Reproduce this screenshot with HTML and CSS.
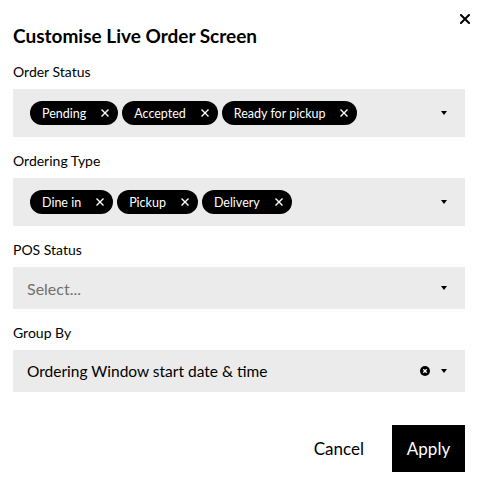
FILE: index.html
```html
<!DOCTYPE html>
<html>
<head>
<meta charset="utf-8">
<link rel="stylesheet" href="styles.css">
</head>
<body>
<div class="modal">
  <div class="close-row">
    <button class="close" aria-label="Close">
      <svg width="10" height="10" viewBox="0 0 10 10"><path d="M1 1L9 9M9 1L1 9" stroke="#000" stroke-width="2" stroke-linecap="square"/></svg>
    </button>
  </div>
  <h1 class="title">Customise Live Order Screen</h1>

  <div class="field">
    <label class="label">Order Status</label>
    <div class="select multi">
      <div class="chips">
        <span class="chip">Pending<svg class="x" viewBox="0 0 8 8"><path d="M0.5 0.5L7.5 7.5M7.5 0.5L0.5 7.5"/></svg></span>
        <span class="chip">Accepted<svg class="x" viewBox="0 0 8 8"><path d="M0.5 0.5L7.5 7.5M7.5 0.5L0.5 7.5"/></svg></span>
        <span class="chip">Ready for pickup<svg class="x" viewBox="0 0 8 8"><path d="M0.5 0.5L7.5 7.5M7.5 0.5L0.5 7.5"/></svg></span>
      </div>
      <span class="caret"></span>
    </div>
  </div>

  <div class="field">
    <label class="label">Ordering Type</label>
    <div class="select multi">
      <div class="chips">
        <span class="chip">Dine in<svg class="x" viewBox="0 0 8 8"><path d="M0.5 0.5L7.5 7.5M7.5 0.5L0.5 7.5"/></svg></span>
        <span class="chip">Pickup<svg class="x" viewBox="0 0 8 8"><path d="M0.5 0.5L7.5 7.5M7.5 0.5L0.5 7.5"/></svg></span>
        <span class="chip">Delivery<svg class="x" viewBox="0 0 8 8"><path d="M0.5 0.5L7.5 7.5M7.5 0.5L0.5 7.5"/></svg></span>
      </div>
      <span class="caret"></span>
    </div>
  </div>

  <div class="field">
    <label class="label">POS Status</label>
    <div class="select single">
      <span class="placeholder">Select...</span>
      <span class="caret"></span>
    </div>
  </div>

  <div class="field">
    <label class="label">Group By</label>
    <div class="select single">
      <span class="value">Ordering Window start date &amp; time</span>
      <svg class="clear" width="10" height="10" viewBox="0 0 10 10"><circle cx="5" cy="5" r="5" fill="#000"/><path d="M3.3 3.3L6.7 6.7M6.7 3.3L3.3 6.7" stroke="#fff" stroke-width="1.3"/></svg>
      <span class="caret"></span>
    </div>
  </div>

  <div class="actions">
    <button class="btn cancel">Cancel</button>
    <button class="btn apply">Apply</button>
  </div>
</div>
</body>
</html>
```
FILE: styles.css
```css
* { box-sizing: border-box; }
html, body { margin: 0; padding: 0; background: #fff; }
body {
  font-family: "Lato", "Noto Sans", sans-serif;
  color: #000;
}
.modal {
  width: 480px;
  height: 480px;
  padding: 14px 15px 0 13px;
}
.close-row {
  display: flex;
  justify-content: flex-end;
  height: 10px;
}
.close {
  border: 0;
  background: none;
  padding: 0;
  margin-right: -5px;
  width: 10px;
  height: 10px;
  display: flex;
}
.title {
  margin: 0;
  font-size: 19px;
  font-weight: 700;
  line-height: 24px;
}
.field { margin-top: 14px; }
.label {
  display: block;
  font-size: 14px;
  line-height: 20px;
  height: 20px;
  margin-bottom: 7px;
}
.select {
  display: flex;
  align-items: center;
  background: #ebebeb;
  padding: 0 18px 0 14px;
}
.select.multi { height: 48px; padding-left: 17px; }
.select.single { height: 42px; }
.chips { display: flex; gap: 4px; flex: 1; }
.chip {
  display: inline-flex;
  align-items: center;
  height: 24px;
  padding: 0 9px 0 12px;
  background: #000;
  color: #fff;
  border-radius: 12px;
  font-size: 12.5px;
}
.chip .x {
  width: 8px;
  height: 8px;
  margin-left: 15px;
  stroke: #fff;
  stroke-width: 1.4;
  fill: none;
}
.caret {
  width: 0;
  height: 0;
  border-left: 3.5px solid transparent;
  border-right: 3.5px solid transparent;
  border-top: 4px solid #000;
  margin-left: auto;
}
.placeholder {
  flex: 1;
  font-size: 16px;
  color: #707070;
}
.value {
  flex: 1;
  font-size: 15.5px;
  color: #000;
}
.clear { margin-right: 11px; }
.actions {
  display: flex;
  justify-content: flex-end;
  align-items: center;
  margin-top: 33px;
  gap: 28px;
}
.btn {
  font-family: inherit;
  font-size: 17px;
  border: 0;
  cursor: pointer;
}
.cancel { background: none; padding: 0; color: #000; }
.apply {
  background: #000;
  color: #fff;
  width: 73px;
  height: 47px;
}
```
